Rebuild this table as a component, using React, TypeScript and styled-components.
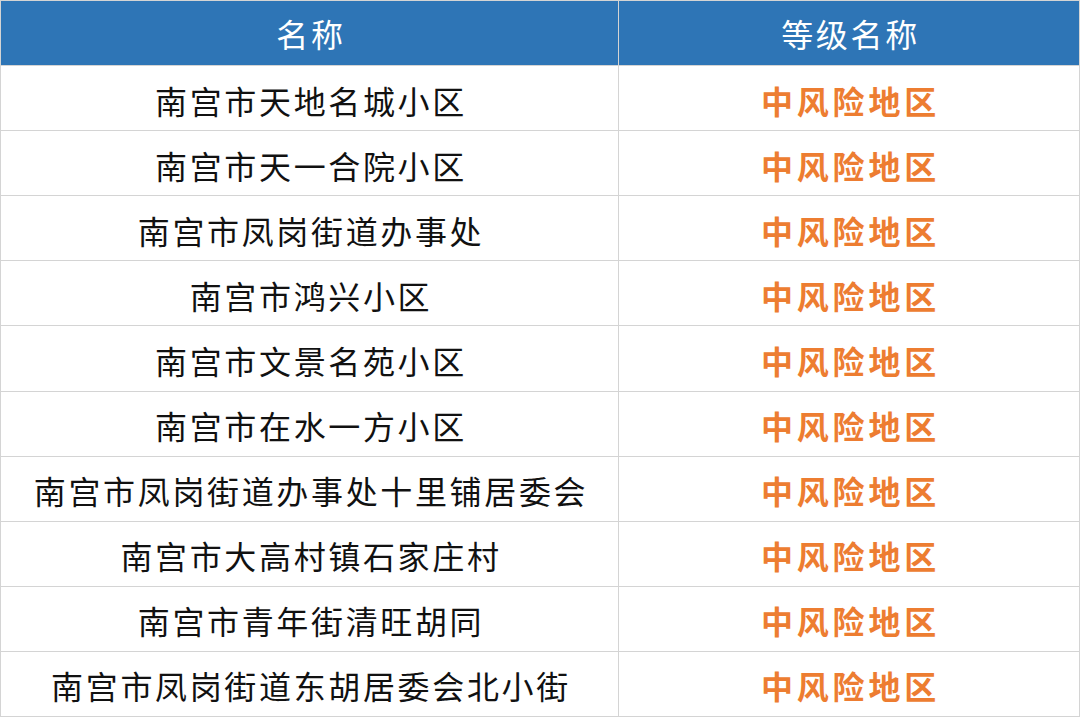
import React from "react";
import styled, { createGlobalStyle } from "styled-components";

const Global = createGlobalStyle`
  html, body { margin: 0; padding: 0; background: #ffffff; }
  body { font-family: "Noto Sans CJK SC", "Noto Sans", sans-serif; }
`;

const Table = styled.div`
  width: 1080px;
  box-sizing: border-box;
  display: grid;
  grid-template-columns: 618px 1fr;
  grid-auto-rows: 65.1px;
  border-top: 1px solid #d4d4d4;
  border-left: 1px solid #d4d4d4;
`;

const Cell = styled.div<{ $head?: boolean; $level?: boolean }>`
  box-sizing: border-box;
  border-right: 1px solid #d4d4d4;
  border-bottom: 1px solid #d4d4d4;
  display: flex;
  align-items: center;
  justify-content: center;
  padding-top: ${(p) => (p.$head ? "0" : "3px")};
  padding-left: ${(p) => (p.$level ? "3px" : "3px")};
  background: ${(p) => (p.$head ? "#2e75b6" : "#ffffff")};
  color: ${(p) => (p.$head ? "#ffffff" : p.$level ? "#ed7d31" : "#111111")};
  font-size: 32px;
  font-weight: ${(p) => (p.$level ? 700 : 400)};
  letter-spacing: ${(p) => (p.$level ? "3.8px" : "2.65px")};
  line-height: 1;
  white-space: nowrap;
`;

const names = [
  "南宫市天地名城小区",
  "南宫市天一合院小区",
  "南宫市凤岗街道办事处",
  "南宫市鸿兴小区",
  "南宫市文景名苑小区",
  "南宫市在水一方小区",
  "南宫市凤岗街道办事处十里铺居委会",
  "南宫市大高村镇石家庄村",
  "南宫市青年街清旺胡同",
  "南宫市凤岗街道东胡居委会北小街",
];

export default function App() {
  return (
    <>
      <Global />
      <Table>
        <Cell $head>名称</Cell>
        <Cell $head>等级名称</Cell>
        {names.map((n) => (
          <React.Fragment key={n}>
            <Cell>{n}</Cell>
            <Cell $level>中风险地区</Cell>
          </React.Fragment>
        ))}
      </Table>
    </>
  );
}
